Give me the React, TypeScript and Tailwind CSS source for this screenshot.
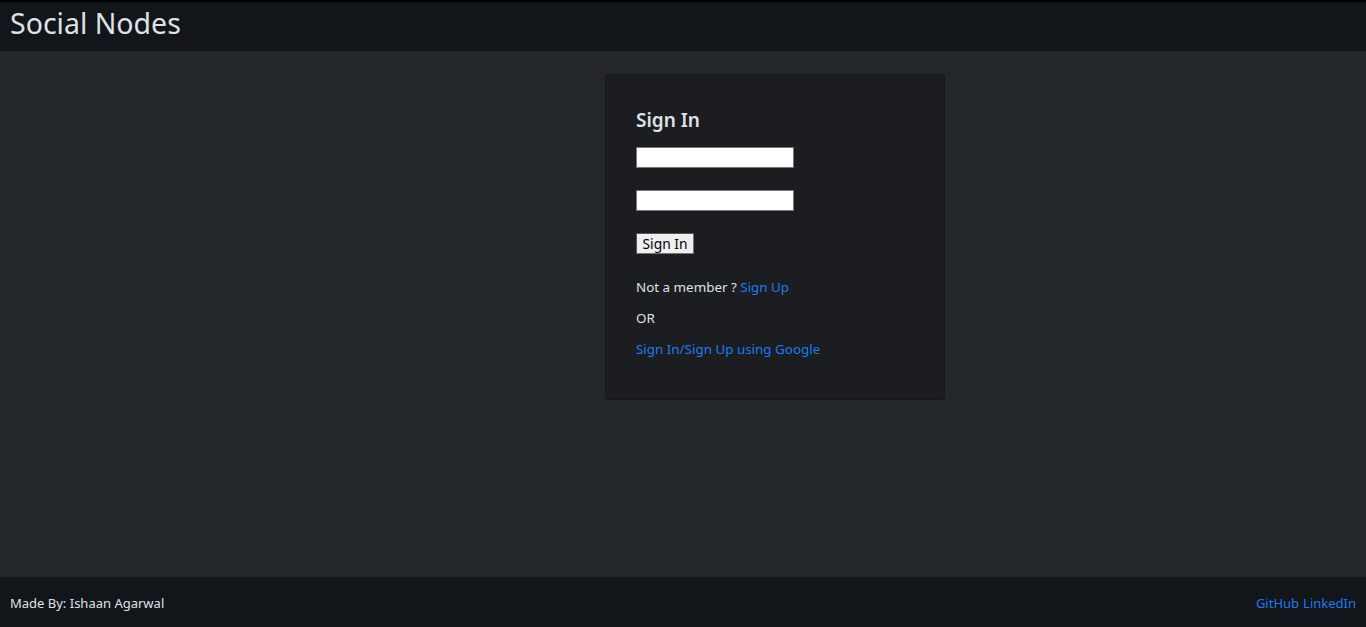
export default function App() {
  return (
    <div
      className="flex h-[627px] flex-col bg-[#23262b] text-[#dee2e6]"
      style={{ fontFamily: '"Noto Sans", "Open Sans", sans-serif' }}
    >
      {/* Navbar */}
      <header className="flex h-[51px] shrink-0 items-center border-t-2 border-black bg-[#121519] px-[10px] pb-[6px]">
        <span className="text-[28.5px] leading-none text-[#dee2e6]">Social Nodes</span>
      </header>

      {/* Main */}
      <main className="flex flex-1 pl-[605px]">
        <div className="mt-[23px] h-[326px] w-[340px] rounded-[3px] border border-[#15171a] bg-[#1b1d21] px-[30px] pt-[30px]">
          <h3 className="text-[19px] font-semibold leading-[30px] text-[#dee2e6]">Sign In</h3>
          <div className="mt-[12px] flex flex-col gap-[22px]">
            <input type="text" className="block h-[21px] w-[158px] border border-[#767676] bg-white" />
            <input type="password" className="block h-[21px] w-[158px] border border-[#767676] bg-white" />
            <button className="h-[21px] w-[58px] border border-[#767676] border-l-[#555] border-t-[#555] bg-[#efefef] pt-px text-[13.8px] leading-none text-black">
              Sign In
            </button>
          </div>
          <div className="mt-[23px] flex flex-col gap-[10px] text-[13.4px] leading-[21px]">
            <p>
              Not a member ? <a className="text-[#1d7cf2]">Sign Up</a>
            </p>
            <p>OR</p>
            <p>
              <a className="text-[#1d7cf2]">Sign In/Sign Up using Google</a>
            </p>
          </div>
        </div>
      </main>

      {/* Footer */}
      <footer className="flex h-[50px] shrink-0 items-center justify-between bg-[#121519] px-[10px] pt-[3px] text-[13px]">
        <span>Made By: Ishaan Agarwal</span>
        <span className="flex gap-[4px] text-[#1d7cf2]">
          <a>GitHub</a>
          <a>LinkedIn</a>
        </span>
      </footer>
    </div>
  )
}
